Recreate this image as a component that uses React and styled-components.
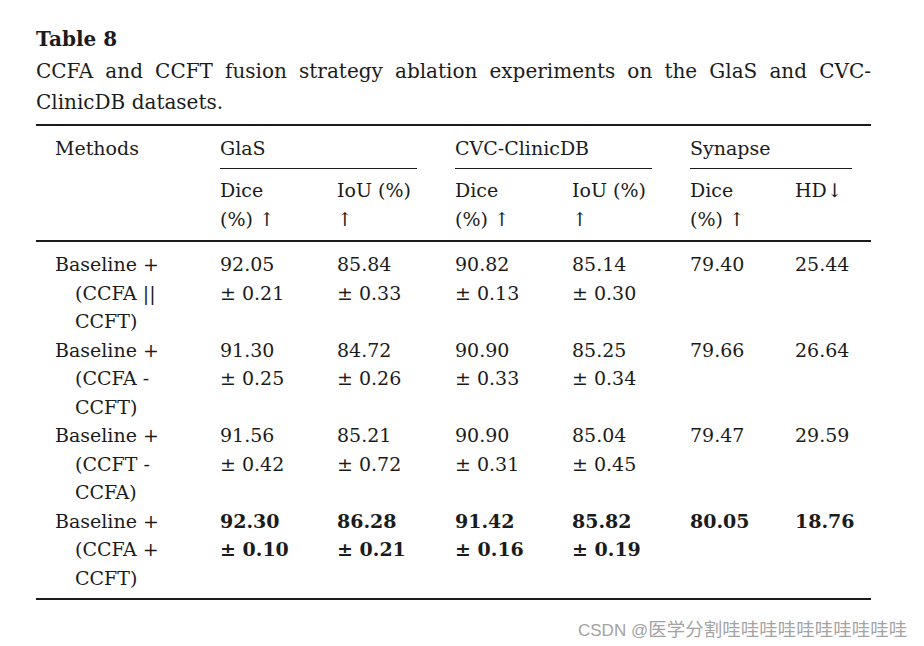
import React from "react";
import styled, { createGlobalStyle } from "styled-components";

const GlobalStyle = createGlobalStyle`
  html, body {
    margin: 0;
    padding: 0;
    background: #ffffff;
  }
  body {
    font-family: "DejaVu Serif", "Liberation Serif", serif;
    color: #1b1b1b;
  }
`;

const Page = styled.div`
  width: 924px;
  height: 646px;
  box-sizing: border-box;
  padding: 24px 0 0 36px;
  position: relative;
  overflow: hidden;
`;

const Caption = styled.div`
  width: 835px;
  font-size: 20px;
  line-height: 31.5px;
`;

const Title = styled.div`
  font-weight: bold;
`;

const CaptionLine = styled.div`
  text-align: ${(p) => (p.$justify ? "justify" : "left")};
  text-align-last: ${(p) => (p.$justify ? "justify" : "left")};
  white-space: nowrap;
`;

const Table = styled.table`
  margin-top: 5px;
  width: 835px;
  table-layout: fixed;
  border-collapse: collapse;
  font-size: 19px;
  line-height: 28.5px;
  border-top: 2px solid #1b1b1b;
  border-bottom: 2px solid #1b1b1b;
`;

const Head = styled.thead`
  border-bottom: 2px solid #1b1b1b;
`;

const Th = styled.th`
  font-weight: normal;
  text-align: left;
  vertical-align: top;
  padding: ${(p) => p.$pad || "0 0 0 19px"};
`;

const Spanner = styled.div`
  border-bottom: 1.5px solid #1b1b1b;
  padding-bottom: 6px;
`;

const Td = styled.td`
  vertical-align: top;
  padding: ${(p) => p.$pad || "0 0 0 19px"};
  font-weight: ${(p) => (p.$bold ? "bold" : "normal")};
  white-space: nowrap;
`;

const MethodCell = styled(Td)`
  padding-left: 39px;
  text-indent: -20px;
`;

const Watermark = styled.div`
  position: absolute;
  left: 578px;
  top: 615px;
  font-family: "Liberation Sans", "Noto Sans CJK SC", sans-serif;
  font-size: 17px;
  line-height: 26px;
  color: #a3a3a3;
  white-space: nowrap;
`;

const Cjk = styled.span`
  font-family: "Noto Sans CJK SC", sans-serif;
  font-size: 18.5px;
`;

const rows = [
  { m: ["Baseline +", "(CCFA ||", "CCFT)"], v: ["92.05", "0.21", "85.84", "0.33", "90.82", "0.13", "85.14", "0.30"], s: ["79.40", "25.44"] },
  { m: ["Baseline +", "(CCFA -", "CCFT)"], v: ["91.30", "0.25", "84.72", "0.26", "90.90", "0.33", "85.25", "0.34"], s: ["79.66", "26.64"] },
  { m: ["Baseline +", "(CCFT -", "CCFA)"], v: ["91.56", "0.42", "85.21", "0.72", "90.90", "0.31", "85.04", "0.45"], s: ["79.47", "29.59"] },
  { m: ["Baseline +", "(CCFA +", "CCFT)"], v: ["92.30", "0.10", "86.28", "0.21", "91.42", "0.16", "85.82", "0.19"], s: ["80.05", "18.76"], bold: true },
];

const widths = [165, 117, 118, 117, 118, 105, 95];

export default function App() {
  return (
    <Page>
      <GlobalStyle />
      <Caption>
        <Title>Table 8</Title>
        <CaptionLine $justify>
          CCFA and CCFT fusion strategy ablation experiments on the GlaS and CVC-
        </CaptionLine>
        <CaptionLine>ClinicDB datasets.</CaptionLine>
      </Caption>
      <Table>
        <colgroup>
          {widths.map((w, i) => (
            <col key={i} style={{ width: w }} />
          ))}
        </colgroup>
        <Head>
          <tr>
            <Th rowSpan={2} $pad="8px 0 0 19px">Methods</Th>
            <Th colSpan={2} $pad="8px 19px 0 19px"><Spanner>GlaS</Spanner></Th>
            <Th colSpan={2} $pad="8px 19px 0 19px"><Spanner>CVC-ClinicDB</Spanner></Th>
            <Th colSpan={2} $pad="8px 19px 0 19px"><Spanner>Synapse</Spanner></Th>
          </tr>
          <tr>
            <Th $pad="7px 0 7px 19px">Dice<br />(%) ↑</Th>
            <Th $pad="7px 0 7px 19px">IoU (%)<br />↑</Th>
            <Th $pad="7px 0 7px 19px">Dice<br />(%) ↑</Th>
            <Th $pad="7px 0 7px 19px">IoU (%)<br />↑</Th>
            <Th $pad="7px 0 7px 19px">Dice<br />(%) ↑</Th>
            <Th $pad="7px 0 7px 19px">HD↓</Th>
          </tr>
        </Head>
        <tbody>
          {rows.map((r, i) => {
            const pad = i === 0 ? "8px 0 0 19px" : i === rows.length - 1 ? "0 0 6px 19px" : undefined;
            return (
              <tr key={i}>
                <MethodCell $pad={pad}>
                  {r.m[0]}<br />{r.m[1]}<br />{r.m[2]}
                </MethodCell>
                {[0, 2, 4, 6].map((k) => (
                  <Td key={k} $pad={pad} $bold={r.bold}>
                    {r.v[k]}<br />± {r.v[k + 1]}
                  </Td>
                ))}
                <Td $pad={pad} $bold={r.bold}>{r.s[0]}</Td>
                <Td $pad={pad} $bold={r.bold}>{r.s[1]}</Td>
              </tr>
            );
          })}
        </tbody>
      </Table>
      <Watermark>
        CSDN @<Cjk>医学分割哇哇哇哇哇哇哇哇哇哇</Cjk>
      </Watermark>
    </Page>
  );
}
